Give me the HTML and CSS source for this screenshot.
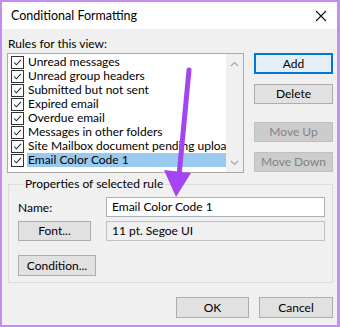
FILE: index.html
```html
<!DOCTYPE html>
<html>
<head>
  <link rel="stylesheet" href="styles.css">
</head>
<body>
  <div class="dialog">
    <div class="titlebar">
      <span class="title">Conditional Formatting</span>
      <svg class="close" width="12" height="12" viewBox="0 0 12 12">
        <path d="M1 1 L11 11 M11 1 L1 11" stroke="#111" stroke-width="1.1" fill="none"/>
      </svg>
    </div>

    <div class="content">
      <div class="rules-label">Rules for this view:</div>

      <div class="rules-row">
        <div class="listbox">
          <div class="items">
            <div class="item"><span class="check"><svg width="13" height="13" viewBox="0 0 13 13"><path d="M2.5 6.5 L5.2 9.2 L10.5 3.5" stroke="#222" stroke-width="1.2" fill="none"/></svg></span><span class="item-text">Unread messages</span></div>
            <div class="item"><span class="check"><svg width="13" height="13" viewBox="0 0 13 13"><path d="M2.5 6.5 L5.2 9.2 L10.5 3.5" stroke="#222" stroke-width="1.2" fill="none"/></svg></span><span class="item-text">Unread group headers</span></div>
            <div class="item"><span class="check"><svg width="13" height="13" viewBox="0 0 13 13"><path d="M2.5 6.5 L5.2 9.2 L10.5 3.5" stroke="#222" stroke-width="1.2" fill="none"/></svg></span><span class="item-text">Submitted but not sent</span></div>
            <div class="item"><span class="check"><svg width="13" height="13" viewBox="0 0 13 13"><path d="M2.5 6.5 L5.2 9.2 L10.5 3.5" stroke="#222" stroke-width="1.2" fill="none"/></svg></span><span class="item-text">Expired email</span></div>
            <div class="item"><span class="check"><svg width="13" height="13" viewBox="0 0 13 13"><path d="M2.5 6.5 L5.2 9.2 L10.5 3.5" stroke="#222" stroke-width="1.2" fill="none"/></svg></span><span class="item-text">Overdue email</span></div>
            <div class="item"><span class="check"><svg width="13" height="13" viewBox="0 0 13 13"><path d="M2.5 6.5 L5.2 9.2 L10.5 3.5" stroke="#222" stroke-width="1.2" fill="none"/></svg></span><span class="item-text">Messages in other folders</span></div>
            <div class="item"><span class="check"><svg width="13" height="13" viewBox="0 0 13 13"><path d="M2.5 6.5 L5.2 9.2 L10.5 3.5" stroke="#222" stroke-width="1.2" fill="none"/></svg></span><span class="item-text">Site Mailbox document pending upload</span></div>
            <div class="item selected"><span class="check"><svg width="13" height="13" viewBox="0 0 13 13"><path d="M2.5 6.5 L5.2 9.2 L10.5 3.5" stroke="#222" stroke-width="1.2" fill="none"/></svg></span><span class="item-text">Email Color Code 1</span></div>
          </div>
          <div class="scrollbar">
            <svg width="9" height="6" viewBox="0 0 9 6"><path d="M1 5 L4.5 1.5 L8 5" stroke="#a6a6a6" stroke-width="1.2" fill="none"/></svg>
            <svg width="9" height="6" viewBox="0 0 9 6"><path d="M1 1 L4.5 4.5 L8 1" stroke="#a6a6a6" stroke-width="1.2" fill="none"/></svg>
          </div>
        </div>

        <div class="side-buttons">
          <button class="btn default">Add</button>
          <button class="btn">Delete</button>
          <button class="btn disabled move-up">Move Up</button>
          <button class="btn disabled">Move Down</button>
        </div>
      </div>

      <fieldset class="group">
        <legend>Properties of selected rule</legend>
        <div class="field-row">
          <span class="field-label">Name:</span>
          <div class="textbox">Email Color Code 1</div>
        </div>
        <div class="field-row">
          <button class="btn font-btn">Font...</button>
          <div class="textbox readonly">11 pt. Segoe UI</div>
        </div>
        <button class="btn condition-btn">Condition...</button>
      </fieldset>

      <div class="footer">
        <button class="btn ok-btn">OK</button>
        <button class="btn cancel-btn">Cancel</button>
      </div>
    </div>
  </div>

  <!-- annotation arrow drawn over the screenshot -->
  <svg class="arrow" width="340" height="327" viewBox="0 0 340 327">
    <path d="M189 70 L179 176" stroke="#a445f2" stroke-width="5" stroke-linecap="round" fill="none"/>
    <path d="M164 170 L191 173 L176 197 Z" fill="#a445f2"/>
  </svg>
</body>
</html>
```

FILE: styles.css
```css
:root {
  --frame: #c48df2;
  --face: #f0f0f0;
  --btn-bg: #e1e1e1;
  --btn-border: #adadad;
  --accent: #0078d7;
}

body {
  margin: 0;
  width: 340px;
  height: 327px;
  padding: 2px 3px 2px 2px;
  box-sizing: border-box;
  background: var(--frame);
  font-family: 'Lato', 'Noto Sans', sans-serif;
  font-size: 12px;
  color: #000;
  position: relative;
  overflow: hidden;
}

.dialog {
  height: 100%;
  background: var(--face);
  display: flex;
  flex-direction: column;
}

.titlebar {
  height: 27px;
  background: #fff;
  display: flex;
  align-items: center;
  justify-content: space-between;
  padding: 0 10px 0 9px;
  flex-shrink: 0;
}

.title {
  font-size: 12.5px;
}

.close {
  margin-top: 1px;
}

.content {
  padding: 0 4px 0 5px;
  display: flex;
  flex-direction: column;
}

.rules-label {
  height: 16px;
  line-height: 16px;
  margin: 7px 0 1px 1px;
}

.rules-row {
  display: flex;
  gap: 10px;
}

/* Listbox with checkboxes */
.listbox {
  width: 237px;
  height: 120px;
  box-sizing: border-box;
  border: 1px solid #a9a9a9;
  background: #fff;
  display: flex;
}

.items {
  flex: 1;
  min-width: 0;
  padding-top: 1px;
  overflow: hidden;
}

.item {
  height: 14px;
  display: flex;
  align-items: center;
  white-space: nowrap;
}

.check {
  width: 13px;
  height: 13px;
  box-sizing: border-box;
  border: 1px solid #333;
  background: #fff;
  margin: 0 3px 0 3px;
  flex-shrink: 0;
  display: flex;
  align-items: center;
  justify-content: center;
}

.check svg {
  display: block;
}

.item-text {
  height: 14px;
  line-height: 14px;
  padding-left: 1px;
  flex: 1;
}

.item.selected .item-text {
  background: #99c9ef;
}

.scrollbar {
  width: 17px;
  background: var(--face);
  display: flex;
  flex-direction: column;
  align-items: center;
  justify-content: space-between;
  padding: 7px 0 6px;
  box-sizing: border-box;
}

.scrollbar svg {
  display: block;
}

/* Buttons */
.btn {
  font-family: inherit;
  font-size: 12px;
  color: #000;
  background: var(--btn-bg);
  border: 1px solid var(--btn-border);
  border-radius: 0;
  padding: 0;
  height: 20px;
  box-sizing: border-box;
  line-height: 16px;
}

.side-buttons {
  width: 79px;
  display: flex;
  flex-direction: column;
  gap: 10px;
}

.btn.default {
  height: 21px;
  border: 2px solid var(--accent);
  background: #e5eef6;
}

.btn.disabled {
  background: #cccccc;
  border-color: #bfbfbf;
  color: #838383;
}

.move-up {
  margin-top: 8px;
}

/* Properties group */
.group {
  margin: 3px 0 0 1px;
  padding: 5px 7px 6px 8px;
  border: 1px solid #dcdcdc;
  display: flex;
  flex-direction: column;
  gap: 4px;
}

.group legend {
  padding: 0 2px;
  margin-left: 6px;
  line-height: 16px;
}

.field-row {
  display: flex;
  align-items: center;
  justify-content: space-between;
}

.field-label {
  padding-left: 1px;
}

.textbox {
  width: 219px;
  height: 20px;
  box-sizing: border-box;
  border: 1px solid #a8b2bd;
  background: #fff;
  padding-left: 5px;
  line-height: 18px;
}

.textbox.readonly {
  background: var(--face);
  border-color: #bcc3ca;
}

.font-btn {
  width: 73px;
  margin-left: 1px;
}

.condition-btn {
  width: 78px;
  height: 21px;
  margin: 10px 0 0 1px;
}

.footer {
  display: flex;
  justify-content: flex-end;
  gap: 10px;
  margin-top: 14px;
}

.ok-btn {
  width: 73px;
  height: 21px;
}

.cancel-btn {
  width: 74px;
  height: 21px;
}

.arrow {
  position: absolute;
  left: 0;
  top: 0;
  pointer-events: none;
}
```
